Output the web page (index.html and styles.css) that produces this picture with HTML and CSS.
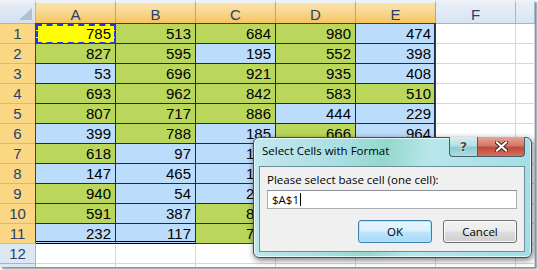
FILE: index.html
```html
<!DOCTYPE html>
<html lang="en">
<head>
    <meta charset="UTF-8">
    <title>Select Cells with Format</title>
    <link rel="stylesheet" href="styles.css">
</head>
<body>
    <div class="screen">
        <div class="sheet">
            <div class="corner"><span class="tri"></span></div>
            <div class="colhead sel">A</div>
            <div class="colhead sel">B</div>
            <div class="colhead sel">C</div>
            <div class="colhead sel">D</div>
            <div class="colhead sel">E</div>
            <div class="colhead">F</div>
            <div class="colhead"></div>

            <div class="rowhead sel">1</div>
            <div class="cell y active">785</div><div class="cell g">513</div><div class="cell g">684</div><div class="cell g">980</div><div class="cell b last">474</div>
            <div class="cell"></div><div class="cell"></div>

            <div class="rowhead sel">2</div>
            <div class="cell g">827</div><div class="cell g">595</div><div class="cell b">195</div><div class="cell g">552</div><div class="cell b last">398</div>
            <div class="cell"></div><div class="cell"></div>

            <div class="rowhead sel">3</div>
            <div class="cell b">53</div><div class="cell g">696</div><div class="cell g">921</div><div class="cell g">935</div><div class="cell b last">408</div>
            <div class="cell"></div><div class="cell"></div>

            <div class="rowhead sel">4</div>
            <div class="cell g">693</div><div class="cell g">962</div><div class="cell g">842</div><div class="cell g">583</div><div class="cell g last">510</div>
            <div class="cell"></div><div class="cell"></div>

            <div class="rowhead sel">5</div>
            <div class="cell g">807</div><div class="cell g">717</div><div class="cell g">886</div><div class="cell b">444</div><div class="cell b last">229</div>
            <div class="cell"></div><div class="cell"></div>

            <div class="rowhead sel">6</div>
            <div class="cell b">399</div><div class="cell g">788</div><div class="cell b">185</div><div class="cell g">666</div><div class="cell b last">964</div>
            <div class="cell"></div><div class="cell"></div>

            <!-- D and E below row 6 sit under the dialog -->
            <div class="rowhead sel">7</div>
            <div class="cell g">618</div><div class="cell b">97</div><div class="cell b">132</div><div class="cell g"></div><div class="cell b last"></div>
            <div class="cell"></div><div class="cell"></div>

            <div class="rowhead sel">8</div>
            <div class="cell b">147</div><div class="cell b">465</div><div class="cell b">176</div><div class="cell g"></div><div class="cell g last"></div>
            <div class="cell"></div><div class="cell"></div>

            <div class="rowhead sel">9</div>
            <div class="cell g">940</div><div class="cell b">54</div><div class="cell b">271</div><div class="cell b"></div><div class="cell g last"></div>
            <div class="cell"></div><div class="cell"></div>

            <div class="rowhead sel">10</div>
            <div class="cell g">591</div><div class="cell b">387</div><div class="cell g">845</div><div class="cell g"></div><div class="cell b last"></div>
            <div class="cell"></div><div class="cell"></div>

            <div class="rowhead sel">11</div>
            <div class="cell b dbl">232</div><div class="cell b dbl">117</div><div class="cell g edge">756</div><div class="cell g edge"></div><div class="cell b last edge"></div>
            <div class="cell"></div><div class="cell"></div>

            <div class="rowhead">12</div>
            <div class="cell"></div><div class="cell"></div><div class="cell"></div><div class="cell"></div><div class="cell"></div>
            <div class="cell"></div><div class="cell"></div>

            <div class="rowhead"></div>
            <div class="cell"></div><div class="cell"></div><div class="cell"></div><div class="cell"></div><div class="cell"></div>
            <div class="cell"></div><div class="cell"></div>
        </div>

        <div class="range"></div>

        <div class="dialog">
            <div class="titlebar">
                <span class="title">Select Cells with Format</span>
                <div class="caption-btns">
                    <span class="cap help">?</span>
                    <span class="cap close">
                        <svg width="13" height="11" viewBox="0 0 13 11">
                            <path d="M2 1.5 L11 9.5 M11 1.5 L2 9.5" stroke="#3a2020" stroke-width="4" stroke-linecap="square"/>
                            <path d="M2 1.5 L11 9.5 M11 1.5 L2 9.5" stroke="#fff" stroke-width="2.2" stroke-linecap="square"/>
                        </svg>
                    </span>
                </div>
            </div>
            <div class="client">
                <label class="prompt">Please select base cell (one cell):</label>
                <div class="field">$A$1<span class="caret"></span></div>
                <div class="actions">
                    <button class="btn default">OK</button>
                    <button class="btn">Cancel</button>
                </div>
            </div>
        </div>
    </div>
</body>
</html>
```

FILE: styles.css
```css
* {
    box-sizing: border-box;
}
body {
    margin: 0;
    width: 538px;
    height: 270px;
    overflow: hidden;
    background-color: #fff;
    font-family: "Liberation Sans", Arial, sans-serif;
}
.screen {
    position: relative;
    width: 535px;
    height: 267px;
    overflow: hidden;
    background-color: #fff;
    box-shadow: 2px 2px 2px #8a8a8a;
}
.sheet {
    display: grid;
    grid-template-columns: 36px repeat(6, 80px) 1fr;
    grid-template-rows: 24px repeat(13, 20px);
    font-size: 15px;
}
.corner {
    position: relative;
    border-top: 3px solid #eef1f6;
    border-right: 1px solid #9eb6ce;
    border-bottom: 1px solid #9eb6ce;
    background: linear-gradient(#e4ecf7, #d6e1ef);
}
.tri {
    position: absolute;
    right: 3px;
    bottom: 3px;
    width: 0;
    height: 0;
    border-left: 13px solid transparent;
    border-bottom: 12px solid #b3bfcf;
}
.colhead {
    display: flex;
    align-items: center;
    justify-content: center;
    padding-top: 2px;
    color: #27416b;
    border-top: 3px solid #eef1f6;
    border-right: 1px solid #9eb6ce;
    border-bottom: 1px solid #9eb6ce;
    background: linear-gradient(#e6eef8, #d9e4f2);
}
.colhead.sel {
    border-right-color: #c9a553;
    border-bottom-color: #c9a553;
    background: linear-gradient(#fbe3ad, #f8d488 55%, #f5c45e);
}
.rowhead {
    display: flex;
    align-items: center;
    justify-content: center;
    color: #27416b;
    border-right: 1px solid #9eb6ce;
    border-bottom: 1px solid #9eb6ce;
    background-color: #dde7f3;
}
.rowhead.sel {
    border-right-color: #c9a553;
    border-bottom-color: #dbb970;
    background-color: #fbd784;
}
.cell {
    display: flex;
    align-items: center;
    justify-content: flex-end;
    padding-right: 4px;
    color: #000;
    border-right: 1px solid #d0d7e5;
    border-bottom: 1px solid #d0d7e5;
}
.cell.y,
.cell.g,
.cell.b {
    border-right-color: #1c2b45;
    border-bottom-color: #1c2b45;
}
.cell.y {
    background-color: #ffff00;
}
.cell.g {
    background-color: #bad75c;
}
.cell.b {
    background-color: #bcdcfc;
}
.cell.last {
    box-shadow: inset -1px 0 0 #1c2b45;
}
.cell.dbl {
    border-bottom: 3px double #000;
    padding-top: 2px;
}
.cell.active {
    outline: 2px dashed #1d3fcf;
    outline-offset: -2px;
}
.range {
    position: absolute;
    left: 35px;
    top: 23px;
    width: 401px;
    height: 220px;
    border: 1px solid #1f2fe6;
    border-bottom: none;
    pointer-events: none;
}
.cell.edge {
    border-bottom-color: #1f2fe6;
}

/* dialog */
.dialog {
    position: absolute;
    left: 253px;
    top: 137px;
    width: 279px;
    height: 121px;
    display: flex;
    flex-direction: column;
    padding: 0 6px 5px 5px;
    border: 1px solid #3f4e58;
    border-radius: 6px;
    background: linear-gradient(100deg, #c4e8ee 0%, #a9dee2 30%, #94d8cc 45%, #b8e6ec 60%, #a2dde6 100%);
    box-shadow: 0 0 0 1px rgba(255, 255, 255, 0.7) inset, 1px 2px 6px rgba(0, 0, 0, 0.55);
    font-family: "Open Sans", "Noto Sans", sans-serif;
    font-size: 11.5px;
    color: #000;
}
.titlebar {
    display: flex;
    justify-content: space-between;
    height: 28px;
}
.title {
    padding: 5px 0 0 3px;
}
.caption-btns {
    display: flex;
    margin-top: -1px;
}
.cap {
    display: flex;
    align-items: center;
    justify-content: center;
    height: 20px;
    border: 1px solid #4b5f69;
    border-top: none;
}
.help {
    width: 28px;
    border-right: none;
    border-radius: 0 0 0 4px;
    background: linear-gradient(#d3eef2, #b7dfe5 45%, #8fcbd2 55%, #a9dde3);
    color: #4a4a4a;
    font-family: "DejaVu Sans", sans-serif;
    font-size: 13px;
    font-weight: bold;
    text-shadow: 0 0 2px #fff, 0 0 1px #fff;
}
.close {
    width: 48px;
    border-radius: 0 0 4px 0;
    background: linear-gradient(#e4a595, #d3796a 45%, #c14a38 55%, #d7705c);
}
.client {
    flex: 1;
    display: flex;
    flex-direction: column;
    padding: 5px 7px 0 7px;
    border: 1px solid #6c8e97;
    background-color: #f0f0f0;
}
.prompt {
    height: 18px;
}
.field {
    display: flex;
    align-items: center;
    height: 19px;
    padding-left: 4px;
    border: 1px solid #abadb3;
    border-top-color: #8e9399;
    background-color: #fff;
}
.caret {
    width: 1px;
    height: 13px;
    margin-left: 1px;
    background-color: #000;
}
.actions {
    display: flex;
    justify-content: flex-end;
    gap: 11px;
    margin-top: 11px;
}
.btn {
    width: 74px;
    height: 23px;
    padding: 0;
    border: 1px solid #707070;
    border-radius: 3px;
    background: linear-gradient(#f2f2f2 0%, #ebebeb 48%, #dddddd 52%, #cfcfcf 100%);
    box-shadow: inset 0 0 0 1px rgba(255, 255, 255, 0.8);
    font-family: inherit;
    font-size: inherit;
    color: #000;
}
.btn.default {
    border-color: #3c7fb1;
    background: linear-gradient(#eaf6fd 0%, #d9f0fc 48%, #bee6fd 52%, #a7d9f5 100%);
    box-shadow: inset 0 0 0 1px #a8e8fc;
}
```
